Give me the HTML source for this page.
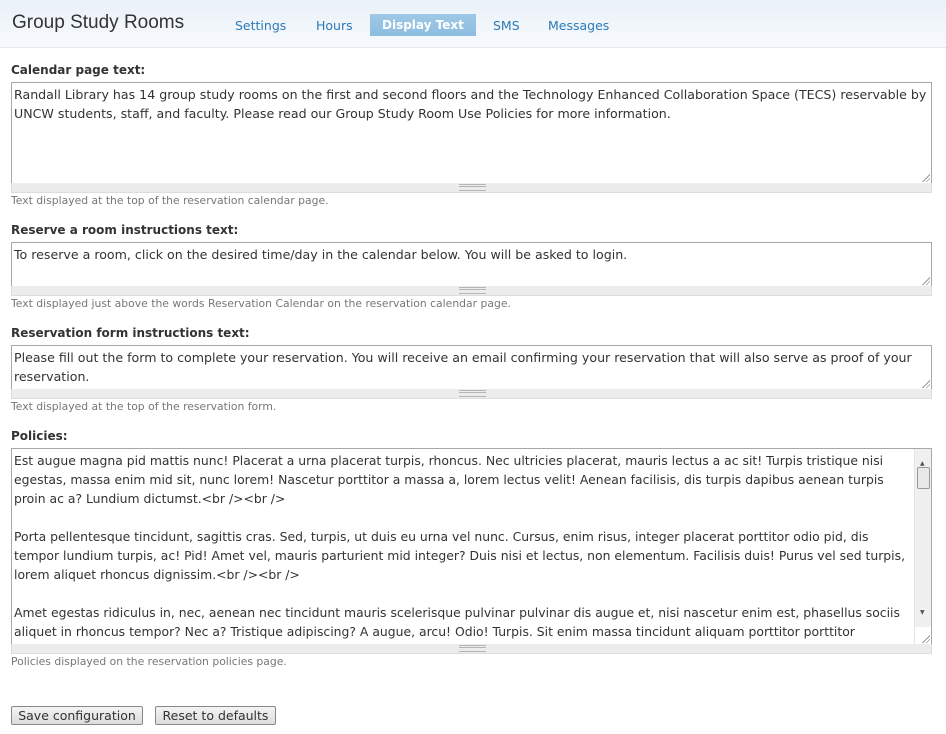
<!DOCTYPE html>
<html><head><meta charset="utf-8"><style>
*{margin:0;padding:0;box-sizing:border-box}
body{width:946px;height:734px;background:#fff;font-family:"DejaVu Sans",Verdana,sans-serif;color:#333;position:relative;overflow:hidden}
.hdr{position:absolute;left:0;top:0;width:946px;height:48px;background:linear-gradient(#eaf1f8,#f7fafd);border-bottom:1px solid #e3e9ef}
.title{position:absolute;left:12px;top:12px;font:19px "Liberation Sans",Arial,sans-serif;color:#333}
.tab{position:absolute;top:14px;height:22px;line-height:23px;font-size:12.5px;color:#2b7ab8;white-space:nowrap}
.tab.on{background:linear-gradient(#9ec8e6,#8dbde0);color:#fff;font-weight:bold;padding:0 12px;font-size:12px}
.lbl{position:absolute;left:11px;font-size:12px;font-weight:bold;color:#333}
.ta{position:absolute;left:11px;width:921px;border:1px solid #a8a8a8;background:#fff;font-size:12.6px;line-height:19px;padding:2px 2px;color:#333;white-space:nowrap;overflow:hidden}
.grip{position:absolute;left:11px;width:921px;height:10px;background:#ececec;border:1px solid #ddd;border-top:none}
.grip:after{content:"";position:absolute;left:447px;top:1px;width:27px;height:5px;border-top:1px solid #b5b5b5;border-bottom:1px solid #b5b5b5;background:linear-gradient(transparent 1px,#b5b5b5 1px,#b5b5b5 2px,transparent 2px)}
.help{position:absolute;left:11px;font-size:10.8px;color:#777;white-space:nowrap}
.rz{position:absolute;right:1px;bottom:1px;width:9px;height:9px;background:linear-gradient(135deg,transparent 55%,#999 55%,#999 62%,transparent 62%,transparent 75%,#999 75%,#999 82%,transparent 82%)}
.btn{position:absolute;top:706px;height:19px;border:1px solid #888;border-radius:2px;background:linear-gradient(#f4f4f4,#dcdcdc);font-size:12.5px;line-height:17px;text-align:center;color:#333}
.sb{position:absolute;right:0;top:0;width:17px;height:100%;background:#f0f0f0;border-left:1px solid #e4e4e4}
.pol{font-size:12.4px}
</style></head><body>
<div class="hdr">
<div class="title">Group Study Rooms</div>
<div class="tab" style="left:235px">Settings</div>
<div class="tab" style="left:316px">Hours</div>
<div class="tab on" style="left:370px;width:106px">Display Text</div>
<div class="tab" style="left:493px">SMS</div>
<div class="tab" style="left:548px">Messages</div>
</div>

<div class="lbl" style="top:63px">Calendar page text:</div>
<div class="ta" style="top:82px;height:102px">Randall Library has 14 group study rooms on the first and second floors and the Technology Enhanced Collaboration Space (TECS) reservable by<br>UNCW students, staff, and faculty. Please read our Group Study Room Use Policies for more information.<div class="rz"></div></div>
<div class="grip" style="top:183px"></div>
<div class="help" style="top:194px">Text displayed at the top of the reservation calendar page.</div>

<div class="lbl" style="top:223px">Reserve a room instructions text:</div>
<div class="ta" style="top:242px;height:45px">To reserve a room, click on the desired time/day in the calendar below. You will be asked to login.<div class="rz"></div></div>
<div class="grip" style="top:286px"></div>
<div class="help" style="top:297px">Text displayed just above the words Reservation Calendar on the reservation calendar page.</div>

<div class="lbl" style="top:326px">Reservation form instructions text:</div>
<div class="ta" style="top:345px;height:45px">Please fill out the form to complete your reservation. You will receive an email confirming your reservation that will also serve as proof of your<br>reservation.<div class="rz"></div></div>
<div class="grip" style="top:389px"></div>
<div class="help" style="top:400px">Text displayed at the top of the reservation form.</div>

<div class="lbl" style="top:429px">Policies:</div>
<div class="ta pol" style="top:448px;height:197px">Est augue magna pid mattis nunc! Placerat a urna placerat turpis, rhoncus. Nec ultricies placerat, mauris lectus a ac sit! Turpis tristique nisi<br>egestas, massa enim mid sit, nunc lorem! Nascetur porttitor a massa a, lorem lectus velit! Aenean facilisis, dis turpis dapibus aenean turpis<br>proin ac a? Lundium dictumst.&lt;br /&gt;&lt;br /&gt;<br><br>Porta pellentesque tincidunt, sagittis cras. Sed, turpis, ut duis eu urna vel nunc. Cursus, enim risus, integer placerat porttitor odio pid, dis<br>tempor lundium turpis, ac! Pid! Amet vel, mauris parturient mid integer? Duis nisi et lectus, non elementum. Facilisis duis! Purus vel sed turpis,<br>lorem aliquet rhoncus dignissim.&lt;br /&gt;&lt;br /&gt;<br><br>Amet egestas ridiculus in, nec, aenean nec tincidunt mauris scelerisque pulvinar pulvinar dis augue et, nisi nascetur enim est, phasellus sociis<br>aliquet in rhoncus tempor? Nec a? Tristique adipiscing? A augue, arcu! Odio! Turpis. Sit enim massa tincidunt aliquam porttitor porttitor
<div class="sb"><div style="position:absolute;left:2px;top:18px;width:13px;height:22px;border:1px solid #999;border-radius:2px;background:#e8e8e8"></div><div style="position:absolute;left:5px;top:5px;font-size:6px;color:#555">▲</div><div style="position:absolute;left:5px;bottom:22px;font-size:6px;color:#555">▼</div><div style="position:absolute;left:0;bottom:0;width:17px;height:17px;background:#fff"></div></div><div class="rz"></div></div>
<div class="grip" style="top:644px"></div>
<div class="help" style="top:655px">Policies displayed on the reservation policies page.</div>

<div class="btn" style="left:11px;width:132px">Save configuration</div>
<div class="btn" style="left:155px;width:121px">Reset to defaults</div>
</body></html>
